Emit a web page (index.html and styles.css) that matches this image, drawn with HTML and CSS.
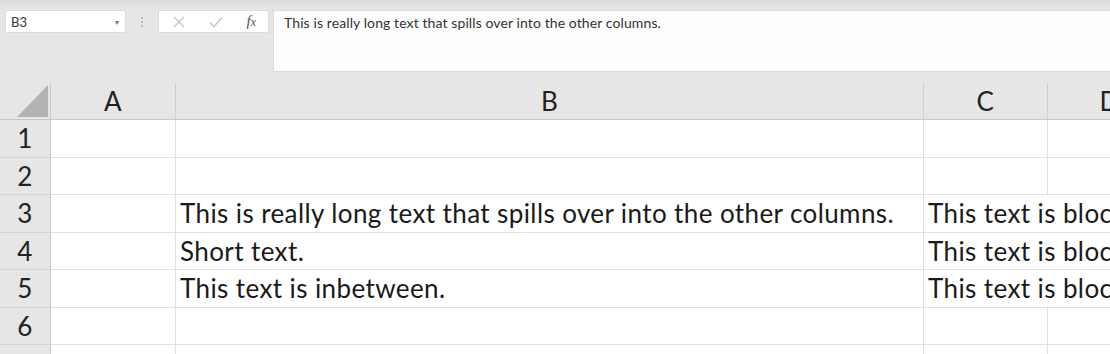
FILE: index.html
```html
<!DOCTYPE html>
<html lang="en">
<head>
    <meta charset="UTF-8">
    <title>Book1 - Excel</title>
    <link rel="stylesheet" href="styles.css">
</head>
<body>
    <div class="formula-area">
        <div class="name-box">
            <span>B3</span>
            <span class="caret">&#9662;</span>
        </div>
        <div class="grip">
            <span></span><span></span><span></span>
        </div>
        <div class="fx-buttons">
            <svg width="14" height="14" viewBox="0 0 14 14"><path d="M2 2 L12 12 M12 2 L2 12" stroke="#c4c4c4" stroke-width="1.3" fill="none"/></svg>
            <svg width="16" height="14" viewBox="0 0 16 14"><path d="M2 7.5 L6 11.5 L14 2.5" stroke="#c4c4c4" stroke-width="1.4" fill="none"/></svg>
            <span class="fx">f<i>x</i></span>
        </div>
        <div class="formula-input">This is really long text that spills over into the other columns.</div>
    </div>

    <div class="sheet-wrap">
        <div class="sheet">
            <div class="corner"><div class="tri"></div></div>
            <div class="col-head">A</div>
            <div class="col-head">B</div>
            <div class="col-head">C</div>
            <div class="col-head">D</div>

            <div class="row-head">1</div>
            <div class="cell"></div><div class="cell"></div><div class="cell"></div><div class="cell"></div>

            <div class="row-head">2</div>
            <div class="cell"></div><div class="cell"></div><div class="cell"></div><div class="cell"></div>

            <div class="row-head">3</div>
            <div class="cell"></div>
            <div class="cell">This is really long text that spills over into the other columns.</div>
            <div class="cell wide">This text is bloc</div>

            <div class="row-head">4</div>
            <div class="cell"></div>
            <div class="cell">Short text.</div>
            <div class="cell wide">This text is bloc</div>

            <div class="row-head">5</div>
            <div class="cell"></div>
            <div class="cell">This text is inbetween.</div>
            <div class="cell wide">This text is bloc</div>

            <div class="row-head">6</div>
            <div class="cell"></div><div class="cell"></div><div class="cell"></div><div class="cell"></div>

            <div class="row-head"></div>
            <div class="cell"></div><div class="cell"></div><div class="cell"></div><div class="cell"></div>
        </div>
    </div>
</body>
</html>
```

FILE: styles.css
```css
body {
    margin: 0;
    background: #e6e6e6;
    font-family: "Lato", "Open Sans", sans-serif;
    overflow: hidden;
    width: 1110px;
    height: 354px;
}

.formula-area {
    display: flex;
    align-items: flex-start;
    height: 83px;
    padding: 10px 0 0 5px;
    box-sizing: border-box;
    background: linear-gradient(#d9d9d9 0px, #e6e6e6 9px);
}

.name-box {
    width: 121px;
    height: 23px;
    background: #fff;
    border: 1px solid #dcdcdc;
    box-sizing: border-box;
    display: flex;
    align-items: center;
    justify-content: space-between;
    padding: 0 6px 0 5px;
    font-size: 13px;
    color: #333;
}

.caret {
    font-size: 8px;
    color: #777;
}

.grip {
    width: 32px;
    height: 23px;
    display: flex;
    flex-direction: column;
    align-items: center;
    justify-content: center;
    gap: 2px;
}

.grip span {
    width: 2px;
    height: 2px;
    background: #bdbdbd;
}

.fx-buttons {
    width: 111px;
    height: 23px;
    background: #fff;
    border: 1px solid #dcdcdc;
    box-sizing: border-box;
    display: flex;
    align-items: center;
    justify-content: space-between;
    padding: 0 12px 0 13px;
}

.fx {
    font-family: "Liberation Serif", serif;
    font-style: italic;
    font-size: 15px;
    color: #555;
}

.fx i {
    font-size: 12px;
}

.formula-input {
    flex: 1;
    height: 62px;
    margin-left: 4px;
    background: #fdfdfd;
    border: 1px solid #dcdcdc;
    border-right: none;
    box-sizing: border-box;
    padding: 3px 10px;
    font-size: 14px;
    letter-spacing: 0.1px;
    color: #333;
}

.sheet-wrap {
    width: 1110px;
    height: 271px;
    overflow: hidden;
}

.sheet {
    display: grid;
    grid-template-columns: 51px 125px 748px 124px 124px;
    grid-template-rows: 37px repeat(6, 37.5px) 14px;
    background: #fff;
    font-size: 26px;
    letter-spacing: 0.4px;
    color: #1a1a1a;
}

.corner {
    background: #e6e6e6;
    border-right: 1px solid #c8c8c8;
    border-bottom: 1px solid #c8c8c8;
    position: relative;
}

.tri {
    position: absolute;
    right: 2px;
    bottom: 2px;
    width: 0;
    height: 0;
    border-left: 31px solid transparent;
    border-bottom: 32px solid #b3b3b3;
}

.col-head {
    background: #e6e6e6;
    border-right: 1px solid #d0d0d0;
    border-bottom: 1px solid #c8c8c8;
    display: flex;
    align-items: center;
    justify-content: center;
    color: #222;
}

.row-head {
    background: #e6e6e6;
    border-right: 1px solid #c8c8c8;
    border-bottom: 1px solid #d4d4d4;
    display: flex;
    align-items: center;
    justify-content: center;
    color: #222;
}

.cell {
    border-right: 1px solid #e1e1e1;
    border-bottom: 1px solid #e1e1e1;
    display: flex;
    align-items: center;
    padding-left: 4px;
    white-space: nowrap;
    overflow: hidden;
}

.cell.wide {
    grid-column: span 2;
}
```
